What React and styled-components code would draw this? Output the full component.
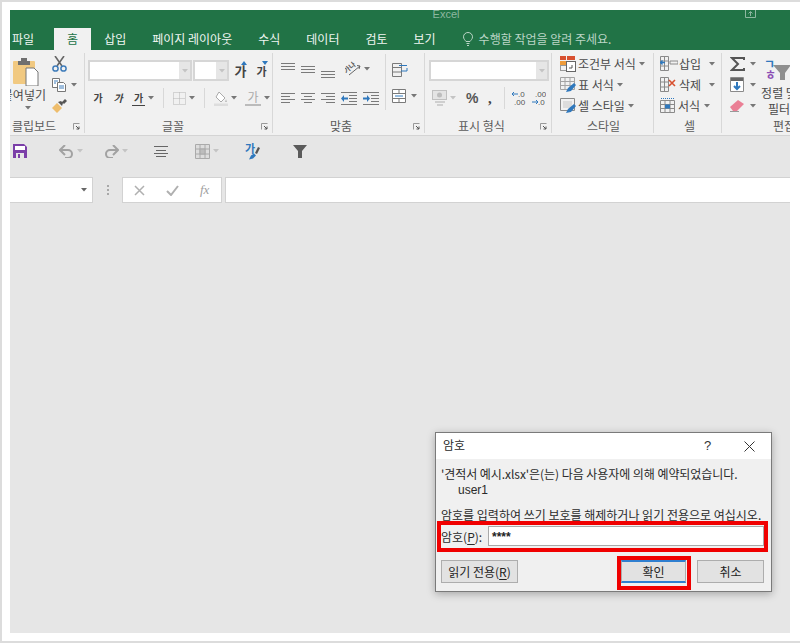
import React from 'react'
import styled, { createGlobalStyle } from 'styled-components'

const GlobalStyle = createGlobalStyle`
  html, body {
    margin: 0;
    background: #fff;
  }
  body {
    font-family: "Noto Sans CJK KR", "Liberation Sans", sans-serif;
  }
  * {
    box-sizing: border-box;
  }
`

const Frame = styled.div`
  width: 800px;
  height: 643px;
  padding: 8px 10px 8px 8px;
  border: solid #dcdcdc;
  border-width: 2px 0 2px 2px;
  overflow: hidden;
`
const Window = styled.div`
  position: relative;
  width: 780px;
  height: 623px;
  display: flex;
  flex-direction: column;
  background: #e6e6e6;
`

/* title + tabs */
const Header = styled.header`
  height: 40px;
  background: #217346;
  color: #f0f6f2;
`
const TitleBar = styled.div`
  height: 18px;
  display: flex;
  padding-left: 137px;
  padding-right: 34px;
  h1 {
    flex: 1;
    margin: 0;
    font: 400 11px/9px "Liberation Sans", sans-serif;
    color: #8db7a0;
    text-align: center;
  }
`
const TabRow = styled.nav`
  height: 22px;
  display: flex;
  padding-left: 2px;
`
const Tab = styled.div`
  padding: 0 ${p => (p.$first ? '20px 0 0' : '13px')};
  font-size: 12px;
  line-height: 21px;
  white-space: nowrap;
  color: ${p => (p.$active ? '#217346' : 'inherit')};
  background: ${p => (p.$active ? '#f1f1f1' : 'transparent')};
`
const TellMe = styled.div`
  display: flex;
  align-items: center;
  gap: 6px;
  height: 21px;
  padding-left: 14px;
  font-size: 12px;
  color: #bcd6c7;
`

/* ribbon */
const Ribbon = styled.section`
  height: 86px;
  display: flex;
  align-items: flex-start;
  background: #f1f1f1;
  border-bottom: 1px solid #d4d4d4;
  color: #4a4a4a;
  font-size: 12px;
`
const Group = styled.div`
  width: ${p => p.$w}px;
  height: 80px;
  margin-top: 3px;
  display: flex;
  flex-direction: column;
  overflow: hidden;
  border-right: ${p => (p.$last ? '0' : '1px solid #d8d8d8')};
`
const GroupBody = styled.div`
  height: 66px;
  display: flex;
  padding-left: ${p => p.$pl || 0}px;
`
const GroupFooter = styled.div`
  height: 14px;
  display: flex;
  align-items: center;
  padding: 0 4px 0 ${p => p.$pl}px;
  font-size: 12px;
  line-height: 14px;
  white-space: nowrap;
  color: #5c5c5c;
`
const Launcher = styled.svg`
  width: 7px;
  height: 7px;
  margin-left: auto;
  flex: none;
`
const PasteButton = styled.div`
  width: 36px;
  display: flex;
  flex-direction: column;
  padding-top: 4px;
`
const PasteLabel = styled.div`
  height: 19px;
  margin-top: -1px;
  display: flex;
  justify-content: flex-end;
  overflow: hidden;
  white-space: nowrap;
  line-height: 19px;
`
const CaretLine = styled.div`
  display: flex;
  justify-content: center;
  margin-top: 2px;
`
const RowStack = styled.div`
  display: flex;
  flex-direction: column;
  margin-left: ${p => p.$ml || 0}px;
`
const MenuRow = styled.div`
  height: 21px;
  display: flex;
  align-items: center;
  gap: ${p => p.$gap ?? 3}px;
  white-space: nowrap;
  font-size: 12px;
`
const MenuCaret = styled.span`
  margin-left: ${p => p.$ml || 1}px;
  display: flex;
`
const Column = styled.div`
  display: flex;
  flex-direction: column;
  width: ${p => p.$w}px;
`
const ToolRow = styled.div`
  display: flex;
  align-items: center;
  gap: ${p => p.$gap || 6}px;
  height: ${p => p.$h || 18}px;
  margin-top: ${p => p.$mt || 0}px;
  padding-left: ${p => p.$pl || 0}px;
`
const Pair = styled.div`
  display: flex;
  align-items: center;
  gap: 3px;
  margin-left: ${p => p.$ml || 0}px;
`
const VSep = styled.div`
  width: 1px;
  height: ${p => p.$h || 20}px;
  margin: ${p => p.$m || '0 1px'};
  background: #d8d8d8;
  flex: none;
`
const ComboGroup = styled.div`
  display: flex;
  height: 21px;
  gap: 1px;
`
const Combo = styled.div`
  width: ${p => p.$w}px;
  height: 21px;
  display: flex;
  justify-content: flex-end;
  background: #fff;
  border: 2px solid #d6d6d6;
`
const ComboArrow = styled.div`
  width: 11px;
  display: flex;
  align-items: center;
  justify-content: center;
  background: #e6e6e6;
`
const FontLetter = styled.span`
  position: relative;
  display: block;
  width: ${p => p.$w || 12}px;
  margin-left: ${p => p.$ml || 0}px;
  font-size: ${p => p.$size || 10}px;
  line-height: 14px;
  font-weight: ${p => p.$weight || 700};
  font-style: ${p => (p.$italic ? 'italic' : 'normal')};
  text-align: center;
  color: ${p => p.$color || '#444'};
  border-bottom: ${p => p.$underline || '0'};
`
const SizeMark = styled.i`
  position: absolute;
  top: -3px;
  right: 0;
  width: 0;
  height: 0;
  border-left: 3px solid transparent;
  border-right: 3px solid transparent;
  ${p => (p.$down ? 'border-top: 4px solid #2f78bd;' : 'border-bottom: 4px solid #2f78bd;')}
`
const PercentMark = styled.span`
  width: 13px;
  margin-left: 5px;
  font: 700 14px/14px "Liberation Sans", sans-serif;
  color: #555;
`
const CommaMark = styled.span`
  width: 6px;
  margin-left: 4px;
  font: 700 15px/12px "Liberation Serif", serif;
  color: #444;
`
const SortColumn = styled.div`
  width: 40px;
  flex: none;
  margin-left: 3px;
  display: flex;
  flex-direction: column;
  padding-top: 6px;
  font-size: 12px;
  line-height: 16px;
  text-align: center;
  white-space: nowrap;
  svg {
    margin: 0 0 5px 6px;
  }
`

/* quick access */
const QuickBar = styled.div`
  height: 41px;
  display: flex;
  align-items: center;
  padding: 0 0 11px 3px;
`
const QuickItem = styled.div`
  display: flex;
  align-items: center;
  gap: 3px;
  margin-left: ${p => p.$ml || 0}px;
`

/* formula bar */
const FormulaBar = styled.div`
  height: 26px;
  display: flex;
  align-items: stretch;
`
const FieldBox = styled.div`
  background: #fff;
  border: 1px solid #d2d2d2;
`
const NameBox = styled(FieldBox)`
  width: 83px;
  border-left: 0;
  display: flex;
  align-items: center;
  justify-content: flex-end;
  padding-right: 5px;
`
const GripDots = styled.div`
  width: 29px;
  display: flex;
  flex-direction: column;
  align-items: center;
  justify-content: center;
  gap: 2px;
  i {
    width: 2px;
    height: 2px;
    background: #a8a8a8;
  }
`
const FormulaButtons = styled(FieldBox)`
  width: 100px;
  display: flex;
  align-items: center;
  padding-left: 11px;
  gap: 21px;
`
const FxMark = styled.span`
  font: italic 13px/14px "Liberation Serif", serif;
  color: #a0a0a0;
`
const FormulaInput = styled(FieldBox)`
  flex: 1;
  margin-left: 3px;
  border-right: 0;
`

/* password dialog */
const Dialog = styled.div`
  position: absolute;
  left: 425px;
  top: 422px;
  width: 337px;
  height: 160px;
  background: #f0f0f0;
  border: 1px solid #7a7a7a;
  box-shadow: 0 2px 8px rgba(0, 0, 0, 0.28);
  color: #2a2a2a;
  font-size: 12px;
`
const DialogTitle = styled.div`
  height: 26px;
  display: flex;
  align-items: center;
  background: #fff;
  padding: 0 16px 0 7px;
  span {
    flex: 1;
    padding-bottom: 3px;
  }
`
const HelpMark = styled.b`
  width: 40px;
  font: 400 13px/14px "Liberation Sans", sans-serif;
  color: #333;
`
const DialogBody = styled.div`
  padding: 6px 5px 0;
  line-height: 17px;
  white-space: nowrap;
`
const Line = styled.p`
  margin: 0;
  padding-left: ${p => p.$pl || 0}px;
  margin-top: ${p => p.$mt || 0}px;
  height: 17px;
  letter-spacing: ${p => (p.$tight ? '-0.06px' : 'normal')};
  font-family: ${p => (p.$latin ? '"Liberation Sans", sans-serif' : 'inherit')};
`
const PasswordRow = styled.div`
  display: flex;
  align-items: center;
  margin-top: 3px;
  height: 20px;
`
const PasswordLabel = styled.label`
  width: 47px;
  flex: none;
  u {
    text-underline-offset: 2px;
  }
`
const PasswordField = styled.div`
  width: 276px;
  height: 20px;
  background: #fff;
  border: 1px solid #a9a9a9;
  padding-left: 3px;
  font: 700 12px/20px "Liberation Sans", sans-serif;
  color: #222;
`
const ButtonRow = styled.div`
  display: flex;
  margin-top: 14px;
`
const DialogButton = styled.button`
  height: 23px;
  width: ${p => p.$w}px;
  margin-left: ${p => p.$ml || 0}px;
  padding: 0;
  background: #e2e2e2;
  border: 1px solid #adadad;
  border-color: ${p => (p.$primary ? '#2f7fd0 #adadad' : '#adadad')};
  border-width: ${p => (p.$primary ? '2px 1px' : '1px')};
  font: inherit;
  color: #222;
  u {
    text-underline-offset: 2px;
  }
`
const RedMark = styled.div`
  position: absolute;
  border: 4px solid #f00000;
`
const PasswordMark = styled(RedMark)`
  left: 1px;
  top: 88px;
  width: 331px;
  height: 31px;
`
const ConfirmMark = styled(RedMark)`
  left: 181px;
  top: 123px;
  width: 74px;
  height: 34px;
`

/* icons */
const G = '#7a7a7a'
const Caret = ({ c = '#777' }) => (
  <svg width="6" height="4" viewBox="0 0 6 4"><path d="M0 0h6L3 3.5z" fill={c} /></svg>
)
const LauncherIcon = () => (
  <Launcher viewBox="0 0 7 7">
    <path d="M.5 6.5v-6h6" fill="none" stroke="#999" />
    <path d="M3 3l3 3M6 3.5V6H3.5" fill="none" stroke="#555" />
  </Launcher>
)
const PasteIcon = () => (
  <svg width="30" height="29" viewBox="0 0 30 29">
    <rect x="3" y="4" width="22" height="23" rx="1" fill="#f1c981" />
    <path d="M8 4h12v4H8zM11 1h6v4h-6z" fill="#6f6f6f" />
    <path d="M16 11h8l4 4v14H16z" fill="#fff" stroke="#777" />
  </svg>
)
const ScissorsIcon = () => (
  <svg width="15" height="16" viewBox="0 0 15 16" fill="none">
    <path d="M3 0l7 10M12 0L5 10" stroke="#666" strokeWidth="1.6" />
    <circle cx="3.5" cy="12.5" r="2.6" stroke="#3f7cba" strokeWidth="1.5" />
    <circle cx="11.5" cy="12.5" r="2.6" stroke="#3f7cba" strokeWidth="1.5" />
  </svg>
)
const CopyIcon = () => (
  <svg width="15" height="14" viewBox="0 0 15 14" fill="#fff" stroke="#777">
    <path d="M.5.5h7v9h-7z" />
    <path d="M5.5 4.5h6l2 2v7h-8z" />
    <path d="M2 3h4M2 5h2M7 8h5M7 10h5" stroke="#3f7cba" />
  </svg>
)
const BrushIcon = () => (
  <svg width="15" height="14" viewBox="0 0 15 14">
    <path d="M0 9l5-5 5 5-5 5z" fill="#eebd6c" />
    <path d="M6 3l3-1 2 2-1 3zM10 3l3-3 2 2-3 3z" fill="#555" />
  </svg>
)
const BorderIcon = () => (
  <svg width="13" height="13" viewBox="0 0 13 13" fill="none" stroke="#b5b5b5" strokeDasharray="1 1">
    <path d="M.5.5h12v12H.5zM6.5.5v12M.5 6.5h12" />
  </svg>
)
const FillIcon = () => (
  <svg width="14" height="15" viewBox="0 0 14 15">
    <path d="M5 1l6 6-4 4-5-5z" fill="#fff" stroke="#aaa" />
    <path d="M12 8l1 3h-2z" fill="#bbb" />
    <rect y="12.5" width="14" height="2.5" fill="#ddd" />
  </svg>
)
const AlignTop = ({ y }) => (
  <svg width="14" height="18" viewBox="0 0 14 18" stroke={G} fill="none">
    <path d={`M0 ${y}.5h14M0 ${y + 3}.5h14M0 ${y + 6}.5h14`} />
  </svg>
)
const AlignText = ({ d }) => (
  <svg width="14" height="12" viewBox="0 0 14 12" stroke={G} fill="none"><path d={d} /></svg>
)
const OrientIcon = () => (
  <svg width="16" height="16" viewBox="0 0 16 16" fill="none">
    <text x="0" y="11" fontSize="7" fontWeight="700" fill="#555" fontFamily="Noto Sans CJK KR" transform="rotate(-40 3 10)">가나</text>
    <path d="M4 14l11-9M12 4.500l3 .5-1 3" stroke="#666" />
  </svg>
)
const IndentIcon = ({ flip }) => (
  <svg width="16" height="13" viewBox="0 0 16 13" fill="none">
    <path d="M0 .5h16M8 3.5h8M8 6.5h8M8 9.5h8M0 12.5h16" stroke={G} />
    <path d={flip ? 'M0 5.5h4V3l3 3.5L4 10V7.5H0z' : 'M7 5.5H3V3L0 6.5 3 10V7.5h4z'} fill="#2f78bd" />
  </svg>
)
const WrapIcon = () => (
  <svg width="16" height="14" viewBox="0 0 16 14" fill="none">
    <path d="M.5.5h9v13h-9z" stroke={G} />
    <path d="M.5 4.5h9M.5 9h9" stroke={G} />
    <path d="M7 2.5h8M15 5v3H9" stroke="#2f78bd" />
  </svg>
)
const MergeIcon = () => (
  <svg width="14" height="14" viewBox="0 0 14 14" fill="#fff">
    <path d="M.5.5h13v13H.5z" stroke={G} />
    <path d="M.5 4.5h13M.5 9.5h13M7 .5v4M7 9.5v4" stroke={G} />
    <path d="M3 7h8" stroke="#2f78bd" />
  </svg>
)
const CurrencyIcon = () => (
  <svg width="15" height="16" viewBox="0 0 15 16" fill="none">
    <rect x=".5" y=".5" width="14" height="9" fill="#e4e4e4" stroke="#c0c0c0" />
    <circle cx="7.5" cy="5" r="2.5" fill="#bdbdbd" />
    <path d="M3 12h10M5 15h6" stroke="#c4c4c4" strokeWidth="1.5" />
  </svg>
)
const DecimalIncrease = () => (
  <svg width="15" height="16" viewBox="0 0 15 16" fill="none">
    <path d="M7 4H1M3 2L1 4l2 2" stroke="#2f78bd" />
    <text x="7" y="7" fontSize="8" fill="#555" fontFamily="Liberation Sans">.0</text>
    <text x="3" y="15" fontSize="8" fill="#555" fontFamily="Liberation Sans">.00</text>
  </svg>
)
const DecimalDecrease = () => (
  <svg width="15" height="16" viewBox="0 0 15 16" fill="none">
    <text x="4" y="7" fontSize="8" fill="#555" fontFamily="Liberation Sans">.00</text>
    <path d="M1 12h6M5 10l2 2-2 2" stroke="#2f78bd" />
    <text x="7" y="15" fontSize="8" fill="#555" fontFamily="Liberation Sans">.0</text>
  </svg>
)
const ConditionalIcon = () => (
  <svg width="16" height="16" viewBox="0 0 16 16" fill="none">
    <rect x="0" y="0" width="6" height="4" fill="#d8502f" />
    <rect x="0" y="5" width="6" height="4" fill="#ef9b3a" />
    <rect x="7" y="0" width="8" height="4" fill="#d8502f" />
    <rect x=".5" y="9.5" width="6" height="5" stroke="#999" />
    <rect x="6.5" y="5.5" width="9" height="10" fill="#fff" stroke="#666" />
    <path d="M9 12h3V9" stroke="#555" />
  </svg>
)
const TableStyleIcon = () => (
  <svg width="16" height="16" viewBox="0 0 16 16" fill="none">
    <path d="M.5.5h14v12H.5zM.5 4.5h14M.5 8.5h14M5 .5v12M10 .5v12" stroke="#a3a3a3" />
    <path d="M6 15l2-4 6-5 2 2-5 6z" fill="#2f78bd" />
  </svg>
)
const CellStyleIcon = () => (
  <svg width="16" height="16" viewBox="0 0 16 16" fill="none">
    <path d="M.5.5h14v12H.5z" stroke="#8a8a8a" />
    <rect x="3" y="3" width="9" height="7" fill="#dcdcdc" />
    <path d="M6 15l2-4 6-5 2 2-5 6z" fill="#2f78bd" />
  </svg>
)
const InsertIcon = () => (
  <svg width="18" height="15" viewBox="0 0 18 15" fill="none">
    <path d="M.5.5h8v14h-8zM.5 5h8M.5 10h8M4.5.5v14" stroke="#8a8a8a" />
    <path d="M10 5h8v3h-8z" stroke="#8a8a8a" />
    <path d="M0 6.5h5M2.5 4.5l-2 2 2 2" stroke="#2f78bd" strokeWidth="1.3" />
  </svg>
)
const DeleteIcon = () => (
  <svg width="18" height="15" viewBox="0 0 18 15" fill="none">
    <path d="M.5.5h8v14h-8zM.5 5h8M.5 10h8M4.5.5v14" stroke="#8a8a8a" />
    <path d="M9 3l6 6M15 3l-6 6" stroke="#d8502f" strokeWidth="1.6" />
  </svg>
)
const FormatIcon = () => (
  <svg width="15" height="15" viewBox="0 0 15 15" fill="none">
    <path d="M.5 2.500h14v12H.5zM.5 6.500h14M.5 10.500h14M5 2.500v12M10 2.500v12" stroke="#8a8a8a" />
    <rect x="5" y="6.500" width="5" height="4" fill="#2f78bd" />
    <path d="M1 .5h13" stroke="#2f78bd" strokeDasharray="1 1" />
  </svg>
)
const SumIcon = () => (
  <svg width="15" height="14" viewBox="0 0 15 14" fill="none">
    <path d="M14 3V1H2l6 6-6 6h12v-2" stroke="#555" strokeWidth="2" />
  </svg>
)
const FillDownIcon = () => (
  <svg width="14" height="15" viewBox="0 0 14 15" fill="#fff">
    <path d="M.5.5h13v14H.5z" stroke="#8a8a8a" />
    <rect x="1" y="1" width="12" height="3" fill="#666" />
    <path d="M7 5v7M4 9l3 3 3-3" stroke="#2f78bd" strokeWidth="2" fill="none" />
  </svg>
)
const EraserIcon = () => (
  <svg width="15" height="13" viewBox="0 0 15 13">
    <path d="M0 8l8-7 6 4-7 7H3z" fill="#ea7f95" />
    <path d="M0 12.500h9" stroke="#999" />
  </svg>
)
const SortIcon = () => (
  <svg width="29" height="21" viewBox="0 0 29 21">
    <path d="M8 6l18 0-6 8v7h-5v-7z" fill="#8f8f8f" />
    <text x="-1" y="10" fontSize="12" fontWeight="700" fill="#2f78bd" fontFamily="Noto Sans CJK KR">ㄱ</text>
    <text x="0" y="21" fontSize="12" fontWeight="700" fill="#8d4fb5" fontFamily="Noto Sans CJK KR">ㅎ</text>
  </svg>
)
const SaveIcon = () => (
  <svg width="14" height="14" viewBox="0 0 14 14">
    <path d="M0 0h11l3 3v11H0z" fill="#7b3fa8" />
    <rect x="2" y="2" width="10" height="4" fill="#fff" />
    <rect x="3" y="9" width="8" height="5" fill="#e6e6e6" />
    <rect x="5" y="10" width="2" height="4" fill="#7b3fa8" />
  </svg>
)
const UndoIcon = ({ flip }) => (
  <svg width="15" height="13" viewBox="0 0 15 13" fill="none" transform={flip ? 'scale(-1 1)' : undefined}>
    <path d="M2 5h7a4 4 0 0 1 0 8H6" stroke="#a2a2a2" strokeWidth="2" />
    <path d="M6 0L1 5l5 5" stroke="#a2a2a2" strokeWidth="2" />
  </svg>
)
const LinesIcon = () => (
  <svg width="14" height="13" viewBox="0 0 14 13" fill="none" stroke="#666">
    <path d="M0 1.500h14M2 5.500h10M0 8.500h14M2 11.500h10" />
  </svg>
)
const GridIcon = () => (
  <svg width="15" height="15" viewBox="0 0 15 15" fill="#ddd" stroke="#aaa">
    <path d="M.5.5h14v14H.5z" />
    <path d="M.5 5h14M.5 10h14M5 .5v14M10 .5v14" fill="none" />
    <rect x="5" y="5" width="5" height="5" fill="#bdbdbd" />
  </svg>
)
const PhoneticIcon = () => (
  <svg width="16" height="17" viewBox="0 0 16 17">
    <text x="0" y="10" fontSize="11" fontWeight="700" fill="#2f78bd" fontFamily="Noto Sans CJK KR">가</text>
    <path d="M4 16.500l2-4 3-2 2 2-3 3z" fill="#2f78bd" />
    <path d="M10 10l3-6 2 1-3 6z" fill="#555" />
  </svg>
)
const FilterIcon = () => (
  <svg width="14" height="13" viewBox="0 0 14 13"><path d="M0 0h14L9 6v7H5V6z" fill="#5b5b5b" /></svg>
)
const BulbIcon = () => (
  <svg width="10" height="14" viewBox="0 0 10 14" fill="none" stroke="#bcd6c7">
    <path d="M3 9.500C2 8 .5 7 .5 4.800a4.500 4.300 0 0 1 9 0C9.500 7 8 8 7 9.500z" />
    <path d="M3.500 11.500h3M4 13.500h2" />
  </svg>
)
const RestoreIcon = () => (
  <svg width="11" height="8" viewBox="0 0 11 8" fill="none" stroke="#8db7a0">
    <path d="M.5-1v8.500h10V-1M5.500 6V2M3.500 3.500l2-2 2 2" />
  </svg>
)
const CrossSmall = () => (
  <svg width="11" height="11" viewBox="0 0 11 11" fill="none" stroke="#b0b0b0" strokeWidth="1.5"><path d="M1 1l9 9M10 1l-9 9" /></svg>
)
const CheckSmall = () => (
  <svg width="13" height="11" viewBox="0 0 13 11" fill="none" stroke="#b0b0b0" strokeWidth="2"><path d="M1 6l4 4 7-9" /></svg>
)
const CloseIcon = () => (
  <svg width="11" height="11" viewBox="0 0 11 11" fill="none" stroke="#333"><path d="M.5.5l10 10M10.500.5l-10 10" /></svg>
)

const tabs = ['삽입', '페이지 레이아웃', '수식', '데이터', '검토', '보기']

const App = () => (
  <Frame>
    <GlobalStyle />
    <Window>
      <Header>
        <TitleBar>
          <h1>Excel</h1>
          <RestoreIcon />
        </TitleBar>
        <TabRow>
          <Tab $first>파일</Tab>
          <Tab $active>홈</Tab>
          {tabs.map(tab => <Tab key={tab}>{tab}</Tab>)}
          <TellMe><BulbIcon />수행할 작업을 알려 주세요.</TellMe>
        </TabRow>
      </Header>

      <Ribbon>
        <Group $w={75}>
          <GroupBody>
            <PasteButton>
              <PasteIcon />
              <PasteLabel>붙여넣기</PasteLabel>
              <CaretLine><Caret /></CaretLine>
            </PasteButton>
            <RowStack $ml={6}>
              <MenuRow><ScissorsIcon /></MenuRow>
              <MenuRow $gap={4}><CopyIcon /><Caret /></MenuRow>
              <MenuRow><BrushIcon /></MenuRow>
            </RowStack>
          </GroupBody>
          <GroupFooter $pl={2}>클립보드<LauncherIcon /></GroupFooter>
        </Group>

        <Group $w={188}>
          <GroupBody $pl={3}>
            <Column>
              <ToolRow $h={21} $mt={7} $gap={5}>
                <ComboGroup>
                  <Combo $w={104}><ComboArrow><Caret c="#c4c4c4" /></ComboArrow></Combo>
                  <Combo $w={36}><ComboArrow><Caret c="#c4c4c4" /></ComboArrow></Combo>
                </ComboGroup>
                <FontLetter $size={13} $w={13}>가<SizeMark /></FontLetter>
                <FontLetter $size={11} $w={13} $ml={3}>가<SizeMark $down /></FontLetter>
              </ToolRow>
              <ToolRow $mt={8} $pl={4} $gap={8}>
                <FontLetter>가</FontLetter>
                <FontLetter $italic>가</FontLetter>
                <Pair><FontLetter $underline="1px solid #444" $w={13}>가</FontLetter><Caret /></Pair>
                <VSep />
                <Pair><BorderIcon /><Caret /></Pair>
                <VSep />
                <Pair><FillIcon /><Caret /></Pair>
                <Pair><FontLetter $underline="2px solid #bbb" $w={16} $size={12} $weight={400} $color="#aaa">가</FontLetter><Caret /></Pair>
              </ToolRow>
            </Column>
          </GroupBody>
          <GroupFooter $pl={77}>글꼴<LauncherIcon /></GroupFooter>
        </Group>

        <Group $w={152}>
          <GroupBody $pl={8}>
            <Column $w={104}>
              <ToolRow $mt={7} $gap={6}>
                <AlignTop y={3} />
                <AlignTop y={6} />
                <AlignTop y={11} />
                <Pair $ml={4}><OrientIcon /><Caret /></Pair>
              </ToolRow>
              <ToolRow $mt={11} $gap={6}>
                <AlignText d="M0 1.500h14M0 4.500h9M0 7.500h14M0 10.500h9" />
                <AlignText d="M0 1.500h14M3 4.500h8M0 7.500h14M3 10.500h8" />
                <AlignText d="M0 1.500h14M5 4.500h9M0 7.500h14M5 10.500h9" />
                <IndentIcon />
                <IndentIcon flip />
              </ToolRow>
            </Column>
            <VSep $h={56} $m="1px 0 0" />
            <RowStack $ml={6}>
              <ToolRow $h={22} $mt={6}><WrapIcon /></ToolRow>
              <ToolRow $h={18} $mt={6} $gap={5}><MergeIcon /><Caret /></ToolRow>
            </RowStack>
          </GroupBody>
          <GroupFooter $pl={57}>맞춤<LauncherIcon /></GroupFooter>
        </Group>

        <Group $w={127}>
          <GroupBody $pl={4}>
            <Column>
              <ToolRow $h={21} $mt={7}>
                <Combo $w={120}><ComboArrow><Caret c="#c4c4c4" /></ComboArrow></Combo>
              </ToolRow>
              <ToolRow $mt={8} $pl={3} $gap={5}>
                <Pair><CurrencyIcon /><Caret c="#c4c4c4" /></Pair>
                <PercentMark>%</PercentMark>
                <CommaMark>,</CommaMark>
                <VSep $h={22} $m="0 1px 0 5px" />
                <DecimalIncrease />
                <DecimalDecrease />
              </ToolRow>
            </Column>
          </GroupBody>
          <GroupFooter $pl={33}>표시 형식<LauncherIcon /></GroupFooter>
        </Group>

        <Group $w={102}>
          <GroupBody $pl={8}>
            <RowStack>
              <MenuRow $gap={2}><ConditionalIcon />조건부 서식<MenuCaret><Caret /></MenuCaret></MenuRow>
              <MenuRow $gap={2}><TableStyleIcon />표 서식<MenuCaret><Caret /></MenuCaret></MenuRow>
              <MenuRow $gap={2}><CellStyleIcon />셀 스타일<MenuCaret><Caret /></MenuCaret></MenuRow>
            </RowStack>
          </GroupBody>
          <GroupFooter $pl={35}>스타일</GroupFooter>
        </Group>

        <Group $w={68}>
          <GroupBody $pl={6}>
            <RowStack>
              <MenuRow $gap={1}><InsertIcon />삽입<MenuCaret $ml={7}><Caret /></MenuCaret></MenuRow>
              <MenuRow $gap={1}><DeleteIcon />삭제<MenuCaret $ml={7}><Caret /></MenuCaret></MenuRow>
              <MenuRow><FormatIcon />서식<MenuCaret><Caret /></MenuCaret></MenuRow>
            </RowStack>
          </GroupBody>
          <GroupFooter $pl={30}>셀</GroupFooter>
        </Group>

        <Group $w={68} $last>
          <GroupBody $pl={8}>
            <RowStack>
              <MenuRow $gap={5}><SumIcon /><Caret /></MenuRow>
              <MenuRow $gap={6}><FillDownIcon /><Caret /></MenuRow>
              <MenuRow $gap={5}><EraserIcon /><Caret /></MenuRow>
            </RowStack>
            <SortColumn>
              <SortIcon />
              <span>정렬 및</span>
              <span>필터</span>
            </SortColumn>
          </GroupBody>
          <GroupFooter $pl={51}>편집</GroupFooter>
        </Group>
      </Ribbon>

      <QuickBar>
        <SaveIcon />
        <QuickItem $ml={32}><UndoIcon /><Caret c="#c4c4c4" /></QuickItem>
        <QuickItem $ml={21}><UndoIcon flip /><Caret c="#c4c4c4" /></QuickItem>
        <QuickItem $ml={26}><LinesIcon /></QuickItem>
        <QuickItem $ml={27}><GridIcon /><Caret c="#c4c4c4" /></QuickItem>
        <QuickItem $ml={26}><PhoneticIcon /></QuickItem>
        <QuickItem $ml={32}><FilterIcon /></QuickItem>
      </QuickBar>

      <FormulaBar>
        <NameBox><Caret c="#666" /></NameBox>
        <GripDots><i /><i /><i /></GripDots>
        <FormulaButtons><CrossSmall /><CheckSmall /><FxMark>fx</FxMark></FormulaButtons>
        <FormulaInput />
      </FormulaBar>

      <Dialog>
        <DialogTitle>
          <span>암호</span>
          <HelpMark>?</HelpMark>
          <CloseIcon />
        </DialogTitle>
        <DialogBody>
          <Line $tight>'견적서 예시.xlsx'은(는) 다음 사용자에 의해 예약되었습니다.</Line>
          <Line $pl={17} $latin>user1</Line>
          <Line $mt={7}>암호를 입력하여 쓰기 보호를 해제하거나 읽기 전용으로 여십시오.</Line>
          <PasswordRow>
            <PasswordLabel>암호(<u>P</u>):</PasswordLabel>
            <PasswordField>****</PasswordField>
          </PasswordRow>
          <ButtonRow>
            <DialogButton $w={77}>읽기 전용(<u>R</u>)</DialogButton>
            <DialogButton $w={65} $ml={103} $primary>확인</DialogButton>
            <DialogButton $w={67} $ml={11}>취소</DialogButton>
          </ButtonRow>
        </DialogBody>
        <PasswordMark />
        <ConfirmMark />
      </Dialog>
    </Window>
  </Frame>
)

export default App
